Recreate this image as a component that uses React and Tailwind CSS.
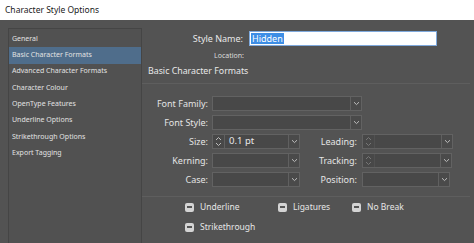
import React from "react";

const font = { fontFamily: '"Noto Sans", "Liberation Sans", sans-serif' };

const sidebarItems = [
  "General",
  "Basic Character Formats",
  "Advanced Character Formats",
  "Character Colour",
  "OpenType Features",
  "Underline Options",
  "Strikethrough Options",
  "Export Tagging",
];

function Chevron() {
  return (
    <svg width="7" height="5" viewBox="0 0 7 5" className="text-[#bdbdbd]">
      <path d="M1 1.2 L3.5 3.6 L6 1.2" fill="none" stroke="currentColor" strokeWidth="1" />
    </svg>
  );
}

function Spinner({ faded }) {
  return (
    <div
      className={`w-[12px] h-full flex items-center justify-center border-r border-[#606060] ${
        faded ? "opacity-40" : ""
      }`}
    >
      <svg width="7" height="11" viewBox="0 0 7 11" className="text-[#c8c8c8]">
        <path d="M1 4 L3.5 1.5 L6 4 M1 7 L3.5 9.5 L6 7" fill="none" stroke="currentColor" strokeWidth="0.9" />
      </svg>
    </div>
  );
}

function Select({ width, spinner, spinnerFaded, value }) {
  return (
    <div className={`${width} h-[15px] flex border border-[#626262] bg-[#484848]`}>
      {spinner && <Spinner faded={spinnerFaded} />}
      <div className="flex-1 flex items-center pl-[4px] text-[9.5px] text-[#e8e8e8]">
        {value}
      </div>
      <div className="w-[11px] h-full flex items-center justify-center border-l border-[#606060] bg-[#4a4a4a]">
        <Chevron />
      </div>
    </div>
  );
}

function Label({ width, children }) {
  return (
    <div className={`${width} text-right text-[9px] text-[#e4e4e4] leading-none`}>
      {children}
    </div>
  );
}

function Check({ label, width }) {
  return (
    <div className={`${width} flex items-center gap-[6px]`}>
      <div className="w-[9px] h-[9px] rounded-[2px] bg-[#d4d4d4] flex items-center justify-center">
        <div className="w-[5px] h-[2px] bg-[#555555]" />
      </div>
      <span className="text-[8.5px] text-[#e6e6e6] leading-none">{label}</span>
    </div>
  );
}

export default function App() {
  return (
    <div className="w-[474px] h-[243px] bg-[#535353] flex flex-col overflow-hidden" style={font}>
      <div className="h-[20px] shrink-0 bg-white flex items-center pl-[5px] text-[8.5px] text-[#1a1a1a]">
        Character Style Options
      </div>

      <div className="flex flex-1 min-h-0">
        {/* sidebar */}
        <div className="ml-[8px] mt-[8px] w-[134px] h-[240px] shrink-0 border border-[#454545] bg-[#515151] pt-[2px]">
          {sidebarItems.map((item, i) => (
            <div
              key={item}
              className={`h-[16.3px] flex items-center pl-[3px] text-[7px] text-[#e2e2e2] ${
                i === 1 ? "bg-[#4f6d8b]" : ""
              }`}
            >
              {item}
            </div>
          ))}
        </div>

        {/* main panel */}
        <div className="flex-1 flex flex-col">
          <div className="flex items-center mt-[11px] h-[15px]">
            <div className="w-[101px] text-right text-[9px] text-[#e8e8e8] leading-none">Style Name:</div>
            <div className="ml-[6px] w-[188px] h-[15px] bg-white border border-[#7fa9dc] flex items-center pl-[1px]">
              <span className="bg-[#3d8ee6] text-white text-[9px] leading-[11px] px-[1px]">Hidden</span>
            </div>
          </div>

          <div className="h-[12px] mt-[4px] flex items-center">
            <div className="w-[102px] text-right text-[7px] text-[#dcdcdc]">Location:</div>
          </div>

          <div className="h-[14px] mt-[3px] pl-[6px] flex items-center text-[8.8px] text-[#e8e8e8]">
            Basic Character Formats
          </div>

          <div className="mt-[4px] border-t border-[#5e5e5e] mr-[4px]" />

          <div className="pl-[6px] mt-[12px] flex flex-col gap-[4px]">
            <div className="flex items-center h-[15px]">
              <Label width="w-[60px]">Font Family:</Label>
              <div className="ml-[4px]">
                <Select width="w-[150px]" />
              </div>
            </div>
            <div className="flex items-center h-[15px]">
              <Label width="w-[60px]">Font Style:</Label>
              <div className="ml-[4px]">
                <Select width="w-[150px]" />
              </div>
            </div>
            <div className="flex items-center h-[15px]">
              <Label width="w-[60px]">Size:</Label>
              <div className="ml-[4px]">
                <Select width="w-[88px]" spinner value="0.1 pt" />
              </div>
              <Label width="w-[57px]">Leading:</Label>
              <div className="ml-[5px]">
                <Select width="w-[91px]" spinner spinnerFaded />
              </div>
            </div>
            <div className="flex items-center h-[15px]">
              <Label width="w-[60px]">Kerning:</Label>
              <div className="ml-[4px]">
                <Select width="w-[88px]" />
              </div>
              <Label width="w-[57px]">Tracking:</Label>
              <div className="ml-[5px]">
                <Select width="w-[90px]" spinner spinnerFaded />
              </div>
            </div>
            <div className="flex items-center h-[15px]">
              <Label width="w-[60px]">Case:</Label>
              <div className="ml-[4px]">
                <Select width="w-[88px]" />
              </div>
              <Label width="w-[57px]">Position:</Label>
              <div className="ml-[5px]">
                <Select width="w-[88px]" />
              </div>
            </div>
          </div>

          <div className="mt-[9px] border-t border-[#5e5e5e] mr-[4px]" />

          <div className="pl-[43px] mt-[5px] flex flex-col gap-[10px]">
            <div className="flex items-center h-[10px]">
              <Check width="w-[93px]" label="Underline" />
              <Check width="w-[74px]" label="Ligatures" />
              <Check width="w-[80px]" label="No Break" />
            </div>
            <div className="flex items-center h-[10px]">
              <Check width="w-[93px]" label="Strikethrough" />
            </div>
          </div>
        </div>
      </div>
    </div>
  );
}
